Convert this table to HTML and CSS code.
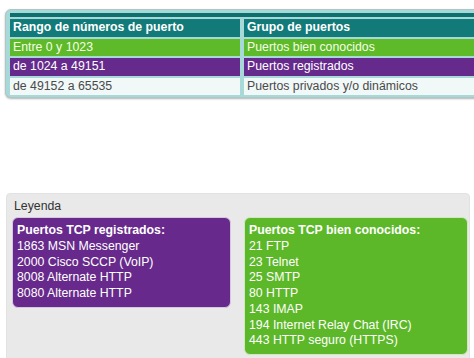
FILE: index.html
```html
<!DOCTYPE html>
<html lang="es">
<head>
<meta charset="utf-8">
<link rel="stylesheet" href="styles.css">
</head>
<body>
<div class="page">
  <div class="table-wrap">
    <div class="band"></div>
    <div class="grid">
      <div class="cell head">Rango de números de puerto</div>
      <div class="cell head">Grupo de puertos</div>
      <div class="cell green">Entre 0 y 1023</div>
      <div class="cell green">Puertos bien conocidos</div>
      <div class="cell purple">de 1024 a 49151</div>
      <div class="cell purple">Puertos registrados</div>
      <div class="cell light">de 49152 a 65535</div>
      <div class="cell light">Puertos privados y/o dinámicos</div>
    </div>
  </div>

  <div class="legend">
    <div class="legend-title">Leyenda</div>
    <div class="legend-boxes">
      <div class="box box-purple">
        <div class="box-head">Puertos TCP registrados:</div>
        <div>1863 MSN Messenger</div>
        <div>2000 Cisco SCCP (VoIP)</div>
        <div>8008 Alternate HTTP</div>
        <div>8080 Alternate HTTP</div>
      </div>
      <div class="box box-green">
        <div class="box-head">Puertos TCP bien conocidos:</div>
        <div>21 FTP</div>
        <div>23 Telnet</div>
        <div>25 SMTP</div>
        <div>80 HTTP</div>
        <div>143 IMAP</div>
        <div>194 Internet Relay Chat (IRC)</div>
        <div>443 HTTP seguro (HTTPS)</div>
      </div>
    </div>
  </div>
</div>
</body>
</html>
```
FILE: styles.css
```css
html, body {
  margin: 0;
  padding: 0;
  background: #ffffff;
  overflow: hidden;
}
body {
  width: 474px;
  height: 358px;
  font-family: "Liberation Sans", Arial, sans-serif;
  font-size: 12.3px;
}
.page {
  display: flex;
  flex-direction: column;
}
.table-wrap {
  margin: 9px 0 0 5px;
  width: 480px;
  border: 1px solid #b3c4c4;
  border-radius: 6px;
  background: #a7d9d9;
  padding: 3px 0 2px 4px;
  box-shadow: 0 1px 2px rgba(120, 130, 130, 0.6);
}
.band {
  height: 4px;
  background: #0f6f6e;
  margin-bottom: 2px;
}
.grid {
  display: grid;
  grid-template-columns: 230px 1fr;
  grid-auto-rows: 17.5px;
  column-gap: 4px;
  row-gap: 2px;
}
.cell {
  padding-left: 3px;
  line-height: 17.5px;
  white-space: nowrap;
}
.head {
  background: #127a79;
  color: #ffffff;
  font-weight: bold;
}
.green {
  background: #5fba2a;
  color: #f4ffe8;
}
.purple {
  background: #662a8c;
  color: #ffffff;
}
.light {
  background: #f1f8f8;
  color: #4a4a4a;
}
.legend {
  margin: 95px 0 0 6px;
  width: 464px;
  height: 170px;
  background: #e9e9e9;
  border: 1px solid #e2e2e2;
  border-radius: 4px 4px 0 0;
  padding: 4px 1px 0 5px;
  box-sizing: border-box;
}
.legend-title {
  color: #333333;
  line-height: 16px;
  padding-left: 2px;
  margin-bottom: 3px;
}
.legend-boxes {
  display: flex;
  align-items: flex-start;
  gap: 13px;
}
.box {
  flex: none;
  border-radius: 6px;
  padding: 5px 4px;
  line-height: 15.75px;
  color: #ffffff;
  white-space: nowrap;
}
.box-head {
  font-weight: bold;
}
.box-purple {
  width: 209px;
  background: #672a8c;
  border: 1px solid #d7c8e0;
}
.box-green {
  width: 214px;
  background: #5db829;
  border: 1px solid #cfe8c0;
}
```
